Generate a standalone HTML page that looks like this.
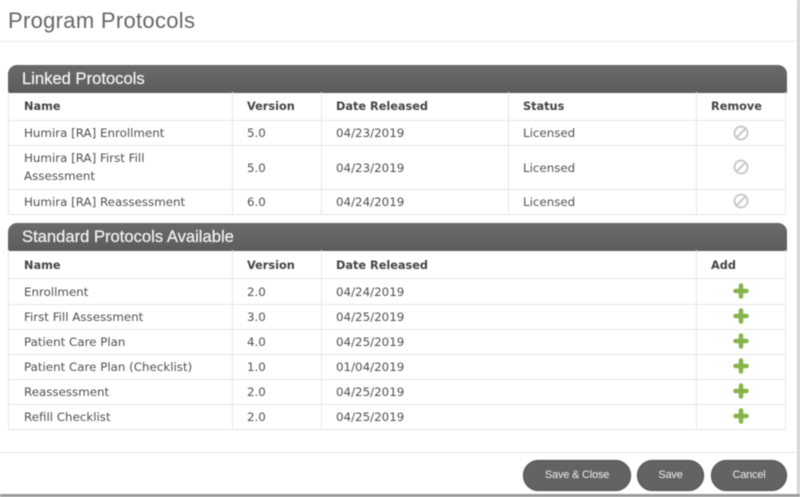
<!DOCTYPE html>
<html><head><meta charset="utf-8">
<style>
html,body{margin:0;padding:0;background:#fff;}
#p{position:relative;width:800px;height:497px;overflow:hidden;background:#fff;font-family:"DejaVu Sans","Liberation Sans",sans-serif;filter:blur(.5px);}
#p div{position:absolute;}
.t{font-size:11.85px;line-height:16px;color:#505050;white-space:nowrap;transform:translateY(-50%);margin-top:1px;}
.t.b{font-weight:bold;color:#444;font-size:11.3px;}
.hl{height:1px;left:9px;width:776px;background:#e6e6e6;}
.vl{width:1px;background:#e6e6e6;}
.bar{left:8px;width:779px;height:27.5px;background:linear-gradient(#6a6a6a,#5c5c5c);border-radius:9px 9px 0 0;}
.bt{color:#f2f2f2;line-height:27px;left:22px;white-space:nowrap;font-family:"Liberation Sans",sans-serif;font-size:16.6px;margin-top:0;-webkit-text-stroke:.25px #f2f2f2;}
.btn{top:460px;height:31px;border-radius:16px;background:#636363;border:1px solid #555;box-sizing:border-box;color:#eee;font-family:"Liberation Sans",sans-serif;font-size:11px;line-height:29px;text-align:center;box-shadow:0 0 1px #888;}
svg{position:absolute;}
</style></head><body>
<div id="p">
<div style="left:8px;top:7px;font-family:'Liberation Sans',sans-serif;font-size:22px;line-height:28px;color:#666;letter-spacing:.3px;">Program Protocols</div>
<div style="left:0;top:41px;width:797px;height:1px;background:#e8e8e8;"></div>
<div style="left:797px;top:0;width:3px;height:497px;background:#d4d4d4;"></div>
<div style="left:0;top:494px;width:800px;height:3px;background:#9a9a9a;"></div>
<div style="left:0;top:452px;width:797px;height:1px;background:#e4e4e4;"></div>

<div class="bar" style="top:65px;"></div>
<div class="bt" style="top:65px;">Linked Protocols</div>
<div class="hl" style="top:120px;"></div><div class="hl" style="top:145px;"></div><div class="hl" style="top:189px;"></div><div class="hl" style="top:214px;"></div>
<div class="vl" style="left:8px;top:92px;height:123px;"></div>
<div class="vl" style="left:232px;top:92px;height:123px;"></div>
<div class="vl" style="left:321px;top:92px;height:123px;"></div>
<div class="vl" style="left:508px;top:92px;height:123px;"></div>
<div class="vl" style="left:696px;top:92px;height:123px;"></div>
<div class="vl" style="left:785px;top:92px;height:123px;"></div>

<div class="t b" style="left:24px;top:106px;">Name</div>
<div class="t b" style="left:247px;top:106px;">Version</div>
<div class="t b" style="left:336px;top:106px;">Date Released</div>
<div class="t b" style="left:523px;top:106px;">Status</div>
<div class="t b" style="left:711px;top:106px;">Remove</div>

<div class="t" style="left:24px;top:132px;">Humira [RA] Enrollment</div>
<div class="t" style="left:247px;top:132px;">5.0</div>
<div class="t" style="left:336px;top:132px;">04/23/2019</div>
<div class="t" style="left:523px;top:132px;">Licensed</div>

<div class="t" style="left:24px;top:157px;">Humira [RA] First Fill</div>
<div class="t" style="left:24px;top:175px;">Assessment</div>
<div class="t" style="left:247px;top:167px;">5.0</div>
<div class="t" style="left:336px;top:167px;">04/23/2019</div>
<div class="t" style="left:523px;top:167px;">Licensed</div>

<div class="t" style="left:24px;top:201px;">Humira [RA] Reassessment</div>
<div class="t" style="left:247px;top:201px;">6.0</div>
<div class="t" style="left:336px;top:201px;">04/24/2019</div>
<div class="t" style="left:523px;top:201px;">Licensed</div>

<svg style="left:733px;top:125px" width="16" height="16" viewBox="0 0 16 16" fill="none" stroke="#cacaca" stroke-width="2"><circle cx="8" cy="8" r="6.5"/><path d="M3.5 12.5L12.5 3.5"/></svg>
<svg style="left:733px;top:159px" width="16" height="16" viewBox="0 0 16 16" fill="none" stroke="#cacaca" stroke-width="2"><circle cx="8" cy="8" r="6.5"/><path d="M3.5 12.5L12.5 3.5"/></svg>
<svg style="left:733px;top:193px" width="16" height="16" viewBox="0 0 16 16" fill="none" stroke="#cacaca" stroke-width="2"><circle cx="8" cy="8" r="6.5"/><path d="M3.5 12.5L12.5 3.5"/></svg>

<div class="bar" style="top:223px;"></div>
<div class="bt" style="top:223px;">Standard Protocols Available</div>
<div class="hl" style="top:278px;"></div><div class="hl" style="top:304px;"></div><div class="hl" style="top:329px;"></div><div class="hl" style="top:354px;"></div><div class="hl" style="top:379px;"></div><div class="hl" style="top:404px;"></div><div class="hl" style="top:429px;"></div>
<div class="vl" style="left:8px;top:250px;height:180px;"></div>
<div class="vl" style="left:232px;top:250px;height:180px;"></div>
<div class="vl" style="left:321px;top:250px;height:180px;"></div>
<div class="vl" style="left:696px;top:250px;height:180px;"></div>
<div class="vl" style="left:785px;top:250px;height:180px;"></div>

<div class="t b" style="left:24px;top:265px;">Name</div>
<div class="t b" style="left:247px;top:265px;">Version</div>
<div class="t b" style="left:336px;top:265px;">Date Released</div>
<div class="t b" style="left:711px;top:265px;">Add</div>

<div class="t" style="left:24px;top:291px;">Enrollment</div><div class="t" style="left:247px;top:291px;">2.0</div><div class="t" style="left:336px;top:291px;">04/24/2019</div>
<div class="t" style="left:24px;top:316px;">First Fill Assessment</div><div class="t" style="left:247px;top:316px;">3.0</div><div class="t" style="left:336px;top:316px;">04/25/2019</div>
<div class="t" style="left:24px;top:341px;">Patient Care Plan</div><div class="t" style="left:247px;top:341px;">4.0</div><div class="t" style="left:336px;top:341px;">04/25/2019</div>
<div class="t" style="left:24px;top:366px;">Patient Care Plan (Checklist)</div><div class="t" style="left:247px;top:366px;">1.0</div><div class="t" style="left:336px;top:366px;">01/04/2019</div>
<div class="t" style="left:24px;top:391px;">Reassessment</div><div class="t" style="left:247px;top:391px;">2.0</div><div class="t" style="left:336px;top:391px;">04/25/2019</div>
<div class="t" style="left:24px;top:416px;">Refill Checklist</div><div class="t" style="left:247px;top:416px;">2.0</div><div class="t" style="left:336px;top:416px;">04/25/2019</div>

<svg style="left:733px;top:283px" width="16" height="16" viewBox="0 0 16 16"><path d="M8 2.5v11M2.5 8h11" fill="none" stroke="#86b44a" stroke-width="4.5" stroke-linecap="round"/></svg>
<svg style="left:733px;top:308px" width="16" height="16" viewBox="0 0 16 16"><path d="M8 2.5v11M2.5 8h11" fill="none" stroke="#86b44a" stroke-width="4.5" stroke-linecap="round"/></svg>
<svg style="left:733px;top:333px" width="16" height="16" viewBox="0 0 16 16"><path d="M8 2.5v11M2.5 8h11" fill="none" stroke="#86b44a" stroke-width="4.5" stroke-linecap="round"/></svg>
<svg style="left:733px;top:358px" width="16" height="16" viewBox="0 0 16 16"><path d="M8 2.5v11M2.5 8h11" fill="none" stroke="#86b44a" stroke-width="4.5" stroke-linecap="round"/></svg>
<svg style="left:733px;top:383px" width="16" height="16" viewBox="0 0 16 16"><path d="M8 2.5v11M2.5 8h11" fill="none" stroke="#86b44a" stroke-width="4.5" stroke-linecap="round"/></svg>
<svg style="left:733px;top:408px" width="16" height="16" viewBox="0 0 16 16"><path d="M8 2.5v11M2.5 8h11" fill="none" stroke="#86b44a" stroke-width="4.5" stroke-linecap="round"/></svg>

<div class="btn" style="left:523px;width:108px;"><span style="letter-spacing:-.2px">Save &amp; Close</span></div>
<div class="btn" style="left:637px;width:67px;"><span style="letter-spacing:-.2px">Save</span></div>
<div class="btn" style="left:711px;width:76px;"><span style="letter-spacing:-.2px">Cancel</span></div>
</div>
</body></html>
